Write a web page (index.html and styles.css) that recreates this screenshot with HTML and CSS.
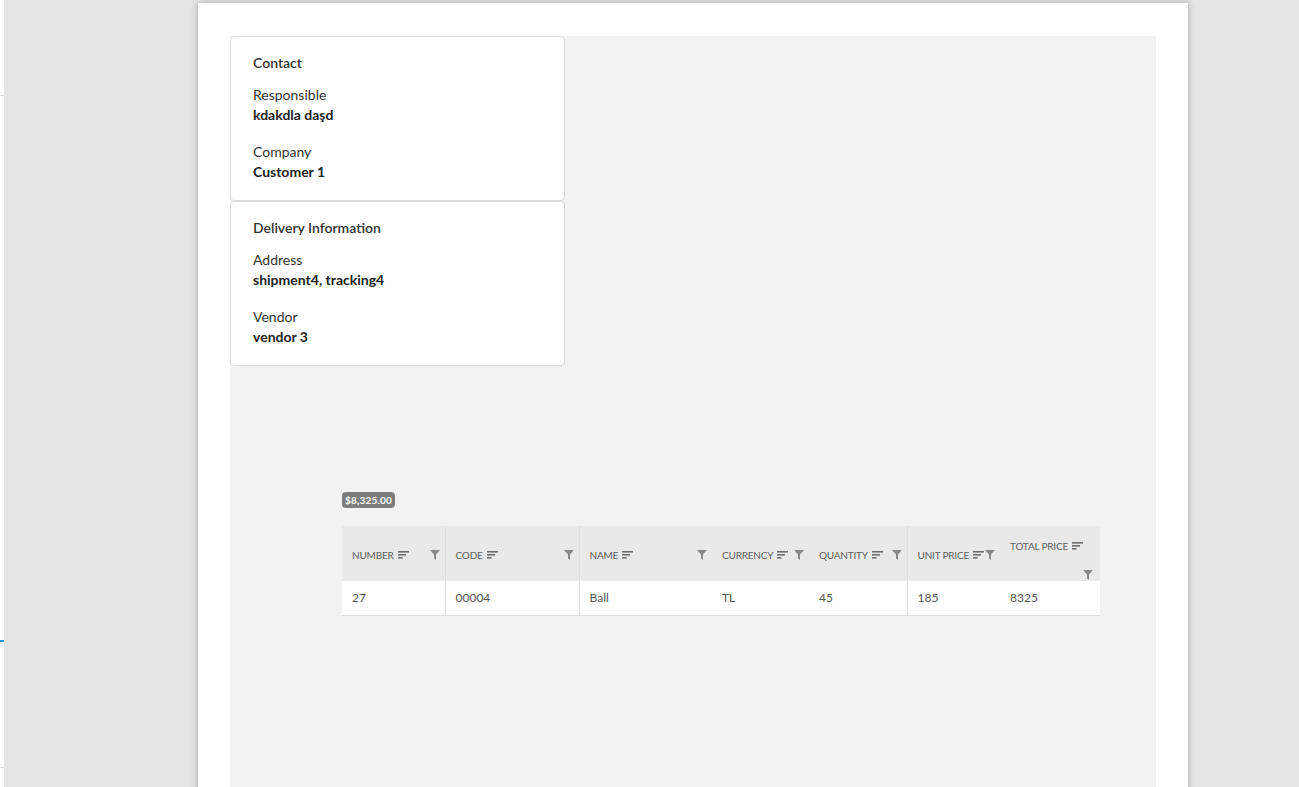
FILE: index.html
```html
<!DOCTYPE html>
<html>
<head>
<meta charset="utf-8">
<link rel="stylesheet" href="styles.css">
</head>
<body>
<div class="app">
  <aside class="side">
    <div class="side-gap1"></div>
    <div class="side-line"></div>
    <div class="side-gap2"></div>
    <div class="side-blue"></div>
    <div class="side-gap3"></div>
    <div class="side-line"></div>
  </aside>
  <main class="workspace">
    <div class="page">
      <div class="content">
        <div class="cards">
          <section class="card">
            <h3 class="card-title">Contact</h3>
            <div class="field">
              <div class="label">Responsible</div>
              <div class="value">kdakdla daşd</div>
            </div>
            <div class="field">
              <div class="label">Company</div>
              <div class="value">Customer 1</div>
            </div>
          </section>
          <section class="card">
            <h3 class="card-title">Delivery Information</h3>
            <div class="field">
              <div class="label">Address</div>
              <div class="value">shipment4, tracking4</div>
            </div>
            <div class="field">
              <div class="label">Vendor</div>
              <div class="value">vendor 3</div>
            </div>
          </section>
        </div>

        <div class="items">
          <div class="badge-row"><span class="badge">$8,325.00</span></div>
          <table class="grid">
            <colgroup>
              <col class="c-number"><col class="c-code"><col class="c-name"><col class="c-currency"><col class="c-qty"><col class="c-unit"><col class="c-total">
            </colgroup>
            <thead>
              <tr>
                <th><div class="th"><span>NUMBER</span><svg class="sort" viewBox="0 0 11 8"><rect x="0" y="0" width="11" height="1.6"/><rect x="0" y="3" width="8" height="1.6"/><rect x="0" y="6" width="4.5" height="1.6"/></svg><svg class="filter" viewBox="0 0 10 10"><path d="M0 0H10L6 4.6V10L4 8.6V4.6Z"/></svg></div></th>
                <th class="bl"><div class="th"><span>CODE</span><svg class="sort" viewBox="0 0 11 8"><rect x="0" y="0" width="11" height="1.6"/><rect x="0" y="3" width="8" height="1.6"/><rect x="0" y="6" width="4.5" height="1.6"/></svg><svg class="filter" viewBox="0 0 10 10"><path d="M0 0H10L6 4.6V10L4 8.6V4.6Z"/></svg></div></th>
                <th class="bl"><div class="th"><span>NAME</span><svg class="sort" viewBox="0 0 11 8"><rect x="0" y="0" width="11" height="1.6"/><rect x="0" y="3" width="8" height="1.6"/><rect x="0" y="6" width="4.5" height="1.6"/></svg><svg class="filter" viewBox="0 0 10 10"><path d="M0 0H10L6 4.6V10L4 8.6V4.6Z"/></svg></div></th>
                <th><div class="th"><span>CURRENCY</span><svg class="sort" viewBox="0 0 11 8"><rect x="0" y="0" width="11" height="1.6"/><rect x="0" y="3" width="8" height="1.6"/><rect x="0" y="6" width="4.5" height="1.6"/></svg><svg class="filter" viewBox="0 0 10 10"><path d="M0 0H10L6 4.6V10L4 8.6V4.6Z"/></svg></div></th>
                <th><div class="th"><span>QUANTITY</span><svg class="sort" viewBox="0 0 11 8"><rect x="0" y="0" width="11" height="1.6"/><rect x="0" y="3" width="8" height="1.6"/><rect x="0" y="6" width="4.5" height="1.6"/></svg><svg class="filter" viewBox="0 0 10 10"><path d="M0 0H10L6 4.6V10L4 8.6V4.6Z"/></svg></div></th>
                <th class="bl"><div class="th"><span>UNIT PRICE</span><svg class="sort" viewBox="0 0 11 8"><rect x="0" y="0" width="11" height="1.6"/><rect x="0" y="3" width="8" height="1.6"/><rect x="0" y="6" width="4.5" height="1.6"/></svg><svg class="filter" viewBox="0 0 10 10"><path d="M0 0H10L6 4.6V10L4 8.6V4.6Z"/></svg></div></th>
                <th><div class="th th-wrap"><span>TOTAL PRICE</span><svg class="sort" viewBox="0 0 11 8"><rect x="0" y="0" width="11" height="1.6"/><rect x="0" y="3" width="8" height="1.6"/><rect x="0" y="6" width="4.5" height="1.6"/></svg><span class="filter-row"><svg class="filter" viewBox="0 0 10 10"><path d="M0 0H10L6 4.6V10L4 8.6V4.6Z"/></svg></span></div></th>
              </tr>
            </thead>
            <tbody>
              <tr>
                <td>27</td>
                <td class="bl">00004</td>
                <td class="bl">Ball</td>
                <td>TL</td>
                <td>45</td>
                <td class="bl">185</td>
                <td>8325</td>
              </tr>
            </tbody>
          </table>
        </div>
      </div>
    </div>
  </main>
</div>
</body>
</html>
```
FILE: styles.css
```css
* { box-sizing: border-box; }
html, body { margin: 0; padding: 0; height: 100%; overflow: hidden; }
body {
  background: #e5e5e5;
  font-family: "Lato", "Noto Sans", sans-serif;
  color: #222;
}
.app { display: flex; height: 787px; }
.side { width: 4px; flex: none; background: #fff; display: flex; flex-direction: column; }
.side-gap1 { height: 95px; }
.side-gap2 { height: 544px; }
.side-gap3 { height: 125px; }
.side-line { height: 1px; background: #d6d6d6; }
.side-blue { height: 2px; background: #1e9bf0; }

.workspace { flex: 1; padding: 3px 0 0 194px; overflow: hidden; }
.page {
  width: 990px;
  min-height: 900px;
  background: #fff;
  box-shadow: 0 0 7px rgba(0,0,0,0.28);
  padding: 33px 32px 0 32px;
}
.content { background: #f2f2f2; min-height: 860px; }

.cards { width: 335px; display: flex; flex-direction: column; }
.card {
  background: #fff;
  border: 1px solid #dcdcdc;
  border-radius: 4px;
  padding: 16px 22px 18px;
}
.card-title {
  margin: 0 0 12px;
  font-size: 14px;
  line-height: 20px;
  font-weight: 600;
  color: #333;
}
.field + .field { margin-top: 17px; }
.label { font-size: 14px; line-height: 20px; color: #333; }
.value { font-size: 14px; line-height: 20px; font-weight: 700; color: #222; }

.items { padding: 126px 0 0 112px; width: 870px; }
.badge-row { display: flex; }
.badge {
  display: block;
  background: #7d7d7d;
  color: #fff;
  font-size: 10px;
  font-weight: 700;
  line-height: 16px;
  padding: 0 3px;
  border-radius: 4px;
  letter-spacing: 0.2px;
}
.grid {
  margin-top: 18px;
  width: 758px;
  border-collapse: collapse;
  table-layout: fixed;
  font-size: 12px;
}
.c-number { width: 103px; }
.c-code { width: 134px; }
.c-name { width: 133px; }
.c-currency { width: 97px; }
.c-qty { width: 98px; }
.c-unit { width: 93px; }
.c-total { width: 100px; }

.grid th {
  background: #e9e9e9;
  height: 55px;
  padding: 0 5px 0 10px;
  text-align: left;
  font-weight: 400;
  font-size: 10px;
  color: #5e5e5e;
  vertical-align: middle;
  white-space: nowrap;
  letter-spacing: -0.2px;
}
.th { display: flex; align-items: center; flex-wrap: nowrap; padding-top: 2px; }
.sort { width: 11px; height: 8px; margin-left: 4px; fill: #6e6e6e; flex: none; }
.filter { width: 10px; height: 10px; margin-left: auto; fill: #888; flex: none; }
.th-wrap { flex-wrap: wrap; padding-top: 12px; }
.th-wrap .filter-row { flex-basis: 100%; display: flex; justify-content: flex-end; margin-top: 18px; padding-right: 2px; }
.th-wrap .filter { margin-left: 0; }

.grid td {
  background: #fff;
  height: 34px;
  padding: 0 10px;
  font-size: 12px;
  color: #555;
  border-bottom: 1px solid #dedede;
}
.grid .bl { border-left: 1px solid #dedede; }
```
